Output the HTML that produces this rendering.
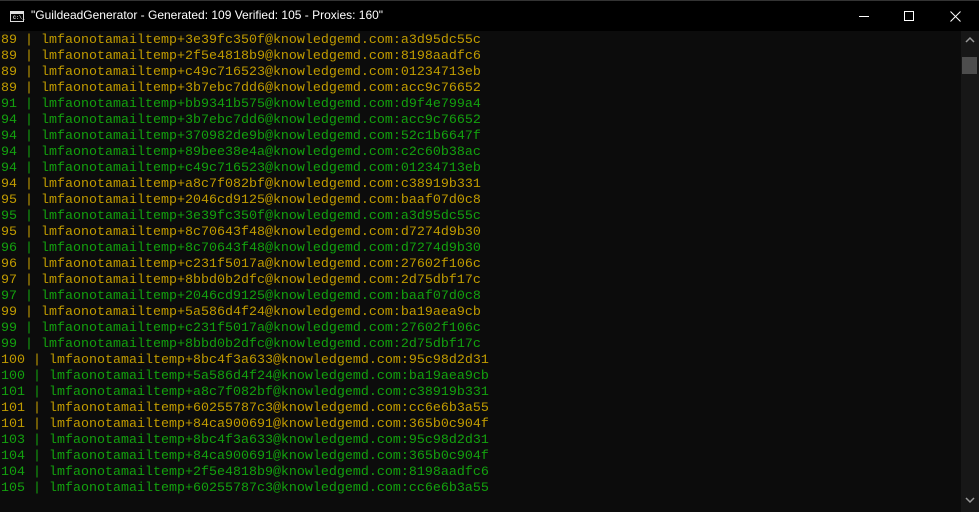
<!DOCTYPE html>
<html><head><meta charset="utf-8"><style>
html,body{margin:0;padding:0;width:979px;height:512px;overflow:hidden;background:#0c0c0c}
.tb{position:absolute;left:0;top:0;width:979px;height:31px;background:#000;border-top:1px solid #333;box-sizing:border-box}
.tt{position:absolute;left:31px;top:7px;color:#fff;font:12px "Liberation Sans",sans-serif}
.ic{position:absolute;left:10px;top:10px;width:14px;height:11px;border:1px solid #ddd;box-sizing:border-box;background:#000}
.ic:before{content:"";position:absolute;left:0;top:0;right:0;height:2px;background:#ddd}
.ic span{position:absolute;left:2px;top:3px;color:#ddd;font:bold 5px "Liberation Mono",monospace}
.con{position:absolute;left:1px;top:33px;font:13.33px/16px "Liberation Mono",monospace;white-space:pre}
.y{color:#c19c00}.g{color:#13a10e}
.sb{position:absolute;left:961px;top:31px;width:18px;height:481px;background:#171717}
.th{position:absolute;left:962px;top:57px;width:15px;height:17px;background:#4d4d4d}
</style></head><body>
<div class="tb"><div class="ic"><span>C:\_</span></div><div class="tt">"GuildeadGenerator - Generated: 109 Verified: 105 - Proxies: 160"</div>
<svg style="position:absolute;left:840px;top:0" width="139" height="31">
<line x1="19" y1="15.5" x2="29" y2="15.5" stroke="#fff" stroke-width="1"/>
<rect x="64.5" y="10.5" width="9" height="9" fill="none" stroke="#fff" stroke-width="1"/>
<path d="M110.5 10.5 L120.5 20.5 M120.5 10.5 L110.5 20.5" stroke="#fff" stroke-width="1"/>
</svg></div>
<div class="sb"></div><div class="th"></div>
<svg style="position:absolute;left:964px;top:36px" width="12" height="8"><path d="M2 6 L6 2 L10 6" fill="none" stroke="#999" stroke-width="1.5"/></svg>
<svg style="position:absolute;left:964px;top:496px" width="12" height="8"><path d="M2 2 L6 6 L10 2" fill="none" stroke="#999" stroke-width="1.5"/></svg>
<div class="con"><span class="y">89 | lmfaonotamailtemp+3e39fc350f@knowledgemd.com:a3d95dc55c</span>
<span class="y">89 | lmfaonotamailtemp+2f5e4818b9@knowledgemd.com:8198aadfc6</span>
<span class="y">89 | lmfaonotamailtemp+c49c716523@knowledgemd.com:01234713eb</span>
<span class="y">89 | lmfaonotamailtemp+3b7ebc7dd6@knowledgemd.com:acc9c76652</span>
<span class="g">91 | lmfaonotamailtemp+bb9341b575@knowledgemd.com:d9f4e799a4</span>
<span class="g">94 | lmfaonotamailtemp+3b7ebc7dd6@knowledgemd.com:acc9c76652</span>
<span class="g">94 | lmfaonotamailtemp+370982de9b@knowledgemd.com:52c1b6647f</span>
<span class="g">94 | lmfaonotamailtemp+89bee38e4a@knowledgemd.com:c2c60b38ac</span>
<span class="g">94 | lmfaonotamailtemp+c49c716523@knowledgemd.com:01234713eb</span>
<span class="y">94 | lmfaonotamailtemp+a8c7f082bf@knowledgemd.com:c38919b331</span>
<span class="y">95 | lmfaonotamailtemp+2046cd9125@knowledgemd.com:baaf07d0c8</span>
<span class="g">95 | lmfaonotamailtemp+3e39fc350f@knowledgemd.com:a3d95dc55c</span>
<span class="y">95 | lmfaonotamailtemp+8c70643f48@knowledgemd.com:d7274d9b30</span>
<span class="g">96 | lmfaonotamailtemp+8c70643f48@knowledgemd.com:d7274d9b30</span>
<span class="y">96 | lmfaonotamailtemp+c231f5017a@knowledgemd.com:27602f106c</span>
<span class="y">97 | lmfaonotamailtemp+8bbd0b2dfc@knowledgemd.com:2d75dbf17c</span>
<span class="g">97 | lmfaonotamailtemp+2046cd9125@knowledgemd.com:baaf07d0c8</span>
<span class="y">99 | lmfaonotamailtemp+5a586d4f24@knowledgemd.com:ba19aea9cb</span>
<span class="g">99 | lmfaonotamailtemp+c231f5017a@knowledgemd.com:27602f106c</span>
<span class="g">99 | lmfaonotamailtemp+8bbd0b2dfc@knowledgemd.com:2d75dbf17c</span>
<span class="y">100 | lmfaonotamailtemp+8bc4f3a633@knowledgemd.com:95c98d2d31</span>
<span class="g">100 | lmfaonotamailtemp+5a586d4f24@knowledgemd.com:ba19aea9cb</span>
<span class="g">101 | lmfaonotamailtemp+a8c7f082bf@knowledgemd.com:c38919b331</span>
<span class="y">101 | lmfaonotamailtemp+60255787c3@knowledgemd.com:cc6e6b3a55</span>
<span class="y">101 | lmfaonotamailtemp+84ca900691@knowledgemd.com:365b0c904f</span>
<span class="g">103 | lmfaonotamailtemp+8bc4f3a633@knowledgemd.com:95c98d2d31</span>
<span class="g">104 | lmfaonotamailtemp+84ca900691@knowledgemd.com:365b0c904f</span>
<span class="g">104 | lmfaonotamailtemp+2f5e4818b9@knowledgemd.com:8198aadfc6</span>
<span class="g">105 | lmfaonotamailtemp+60255787c3@knowledgemd.com:cc6e6b3a55</span></div>
</body></html>
